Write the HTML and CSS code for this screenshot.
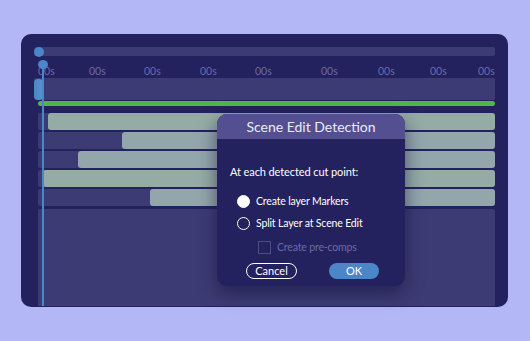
FILE: index.html
```html
<!DOCTYPE html>
<html>
<head>
<meta charset="utf-8">
<link rel="stylesheet" href="styles.css">
</head>
<body>
<div class="stage">
  <div class="panel">
    <div class="scrub"><span class="knob"></span></div>
    <div class="ruler">
      <span style="margin-left:4px">00s</span>
      <span style="margin-left:36px">00s</span>
      <span style="margin-left:40px">00s</span>
      <span style="margin-left:41px">00s</span>
      <span style="margin-left:40px">00s</span>
      <span style="margin-left:51px">00s</span>
      <span style="margin-left:42px">00s</span>
      <span style="margin-left:37px">00s</span>
      <span style="margin-left:33px">00s</span>
    </div>
    <div class="layer"><span class="handle"></span></div>
    <div class="green"></div>
    <div class="rows">
      <div class="row"><div class="clip clip-a" style="margin-left:10px"></div></div>
      <div class="row"><div class="clip" style="margin-left:84px"></div></div>
      <div class="row"><div class="clip" style="margin-left:40px"></div></div>
      <div class="row"><div class="clip clip-a" style="margin-left:5px"></div></div>
      <div class="row"><div class="clip" style="margin-left:112px"></div></div>
    </div>
    <div class="fill"></div>
    <div class="playhead"><span class="ph-head"></span><span class="ph-line"></span></div>

    <div class="dialog">
      <div class="dlg-head">Scene Edit Detection</div>
      <div class="dlg-body">
        <div class="prompt">At each detected cut point:</div>
        <div class="opt"><span class="radio on"></span>Create layer Markers</div>
        <div class="opt opt2"><span class="radio"></span>Split Layer at Scene Edit</div>
        <div class="opt sub"><span class="check"></span>Create pre-comps</div>
        <div class="btns">
          <span class="btn cancel">Cancel</span>
          <span class="btn ok">OK</span>
        </div>
      </div>
    </div>
  </div>
</div>
</body>
</html>
```
FILE: styles.css
```css
* { box-sizing: border-box; }
html, body { margin: 0; padding: 0; }
body {
  background: #b4b7f5;
  font-family: "Lato", "Open Sans", sans-serif;
  width: 530px;
  height: 341px;
  overflow: hidden;
}
.stage {
  padding: 34px 22px 34px 21px;
}
.panel {
  position: relative;
  height: 273px;
  background: #23215e;
  border-radius: 10px;
  padding: 13px 13px 1px 13px;
  display: flex;
  flex-direction: column;
}
.scrub {
  height: 9px;
  background: #3d3b73;
  border-radius: 2px;
  position: relative;
}
.knob {
  position: absolute;
  left: 0;
  top: -0.5px;
  width: 10px;
  height: 10px;
  border-radius: 50%;
  background: #4a86c8;
}
.ruler {
  height: 22px;
  padding-top: 9px;
  display: flex;
  font-size: 10.5px;
  line-height: 12px;
  color: #6c6aab;
}
.ruler span { width: 15px; white-space: nowrap; }
.layer {
  height: 22px;
  background: #3d3b73;
  border-radius: 2px;
  display: flex;
}
.handle {
  width: 9px;
  height: 21px;
  margin-top: 1px;
  border-radius: 4px;
  background: linear-gradient(90deg, #4a86c8, #5b92cf);
}
.green {
  margin: 1px 0 0 4px;
  height: 5px;
  background: #4db848;
  border-radius: 3px;
}
.rows {
  margin: 7px 0 0 4px;
  display: flex;
  flex-direction: column;
  gap: 2px;
}
.row {
  height: 17px;
  background: #3d3b73;
  border-radius: 2px;
  display: flex;
}
.clip {
  flex: 1;
  background: #93a6ac;
  border-radius: 3px;
}
.clip-a { background: #95aba6; }
.fill {
  margin: 3px 0 0 4px;
  flex: 1;
  background: #3d3b73;
  border-radius: 2px 2px 0 0;
}
.playhead {
  position: absolute;
  left: 17px;
  top: 26px;
  bottom: 1px;
  width: 10px;
}
.ph-head {
  position: absolute;
  left: 0;
  top: 0;
  width: 10px;
  height: 9px;
  border-radius: 50%;
  background: #4a86c8;
}
.ph-line {
  position: absolute;
  left: 4px;
  top: 4px;
  bottom: 0;
  width: 2px;
  background: #4a86c8;
}
.dialog {
  position: absolute;
  left: 196px;
  top: 80px;
  width: 188px;
  height: 172px;
  background: #23215e;
  border-radius: 10px;
  box-shadow: 0 7px 18px rgba(20, 18, 60, 0.6);
  overflow: hidden;
  display: flex;
  flex-direction: column;
}
.dlg-head {
  height: 25px;
  background: #534f90;
  color: #eceaf8;
  font-size: 14px;
  line-height: 25px;
  text-align: center;
}
.dlg-body {
  padding: 26px 0 0 13px;
  color: #ffffff;
  font-size: 11px;
}
.prompt { line-height: 14px; height: 14px; letter-spacing: -0.1px; }
.opt {
  display: flex;
  align-items: center;
  height: 14px;
  margin-top: 15px;
  padding-left: 7px;
  gap: 6px;
  font-size: 10.5px;
  letter-spacing: -0.15px;
}
.opt2 { margin-top: 8px; }
.radio {
  flex: none;
  width: 13px;
  height: 13px;
  border-radius: 50%;
  border: 1.5px solid #ffffff;
}
.radio.on { background: #ffffff; }
.sub {
  margin-top: 10px;
  padding-left: 28px;
  color: #6d6ba6;
}
.check {
  flex: none;
  width: 13px;
  height: 13px;
  border: 1px solid #4e4c85;
}
.btns {
  display: flex;
  margin-top: 9px;
  padding-left: 16px;
  gap: 32px;
}
.btn {
  height: 16px;
  border-radius: 8px;
  font-size: 11px;
  line-height: 14px;
  text-align: center;
  color: #ffffff;
}
.cancel {
  width: 51px;
  border: 1.2px solid #ffffff;
}
.ok {
  width: 50px;
  background: #4a86c8;
  line-height: 16px;
}
```
